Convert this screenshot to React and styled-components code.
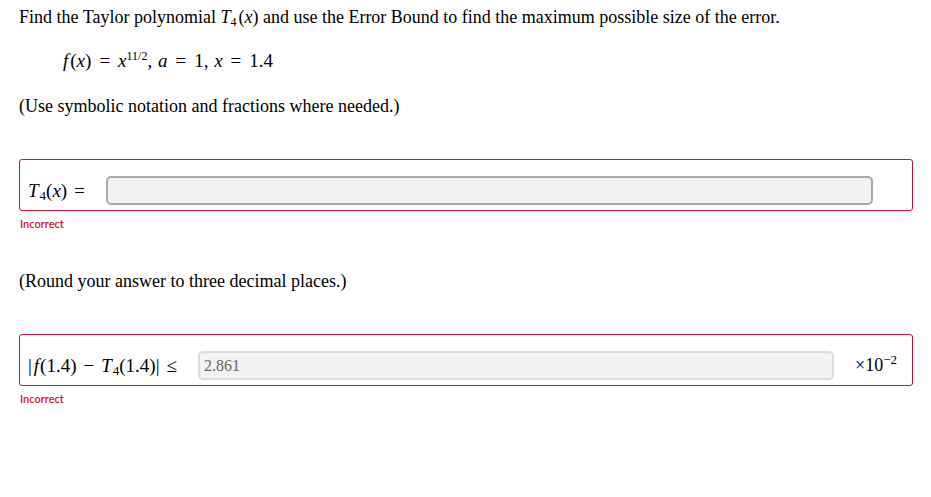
import React from "react";
import styled, { createGlobalStyle } from "styled-components";

const Global = createGlobalStyle`
  html, body { margin: 0; padding: 0; background: #ffffff; }
  body { font-family: "Liberation Serif", "Times New Roman", serif; color: #000; }
`;

const RED = "#d0103a";

const Page = styled.div`
  padding: 7px 18px 0 19px;
  width: 931px;
  box-sizing: border-box;
`;

const Para = styled.p`
  margin: ${(p) => p.$top || 0}px 0 0 ${(p) => p.$indent || 0}px;
  font-size: ${(p) => p.$size || 18}px;
  line-height: 20px;
  white-space: nowrap;
`;

const V = styled.i`
  font-style: italic;
  margin-left: ${(p) => p.$lead || 0}px;
  margin-right: ${(p) => p.$kern || 0}px;
`;

const Sub = styled.sub`
  font-size: ${(p) => p.$size || 12}px;
  vertical-align: -3px;
  line-height: 0;
  margin-left: ${(p) => p.$gap || 0}px;
  margin-right: ${(p) => p.$after || 0}px;
`;

const Sup = styled.sup`
  font-size: ${(p) => p.$size || 11}px;
  vertical-align: ${(p) => p.$raise || 6}px;
  line-height: 0;
`;

const Op = styled.span`
  margin: 0 ${(p) => p.$space ?? 4}px;
`;

const AnswerBox = styled.div`
  margin-top: ${(p) => p.$top}px;
  height: 52px;
  box-sizing: border-box;
  border: 1px solid ${RED};
  border-radius: 3px;
  display: flex;
  align-items: center;
  padding: 16px ${(p) => p.$right}px 5px 8px;
`;

const Label = styled.span`
  font-family: "Liberation Serif", "Times New Roman", serif;
  font-size: 19px;
  white-space: nowrap;
  margin-right: ${(p) => p.$gap}px;
`;

const Field = styled.div`
  flex: 1;
  height: 29px;
  box-sizing: border-box;
  border: 2px solid ${(p) => (p.$light ? "#dcdcdc" : "#a9a9a9")};
  border-radius: 5px;
  background: #f2f2f2;
  display: flex;
  align-items: center;
  padding-left: 4px;
  font-family: "Liberation Serif", "Times New Roman", serif;
  font-size: 16px;
  color: #666666;
`;

const Suffix = styled.span`
  font-family: "Liberation Serif", "Times New Roman", serif;
  font-size: 18px;
  margin-left: 21px;
  white-space: nowrap;
`;

const Feedback = styled.div`
  margin-top: 6px;
  font-family: Lato, "Noto Sans", sans-serif;
  font-size: 11px;
  line-height: 14px;
  font-weight: 600;
  color: ${RED};
  padding-left: 1px;
`;

export default function App() {
  return (
    <>
      <Global />
      <Page>
        <Para>
          Find the Taylor polynomial <V>T</V>
          <Sub $after={2}>4</Sub>(<V>x</V>) and use the Error Bound to find the
          maximum possible size of the error.
        </Para>
        <Para $top={24} $indent={44} $size={19}>
          <V $kern={2}>f</V>(<V>x</V>)<Op $space={8}>=</Op>
          <V>x</V>
          <Sup $size={12} $raise={7}>11/2</Sup>, <V $lead={1}>a</V>
          <Op $space={8}>=</Op>1, <V $lead={1}>x</V>
          <Op $space={8}>=</Op>1.4
        </Para>
        <Para $top={25}>(Use symbolic notation and fractions where needed.)</Para>

        <AnswerBox $top={43} $right={39}>
          <Label $gap={14}>
            <V>T</V>
            <Sub $size={13} $gap={1}>4</Sub>(<V>x</V>)<Op $space={7}>=</Op>
          </Label>
          <Field />
        </AnswerBox>
        <Feedback>Incorrect</Feedback>

        <Para $top={40}>(Round your answer to three decimal places.)</Para>

        <AnswerBox $top={43} $right={15}>
          <Label $gap={14}>
            |<V $lead={2} $kern={1}>f</V>(1.4)<Op $space={7}>−</Op>
            <V>T</V>
            <Sub $size={13} $gap={1}>4</Sub>(1.4)|<Op $space={7}>≤</Op>
          </Label>
          <Field $light>2.861</Field>
          <Suffix>
            ×10<Sup $size={13} $raise={7}>−2</Sup>
          </Suffix>
        </AnswerBox>
        <Feedback>Incorrect</Feedback>
      </Page>
    </>
  );
}
